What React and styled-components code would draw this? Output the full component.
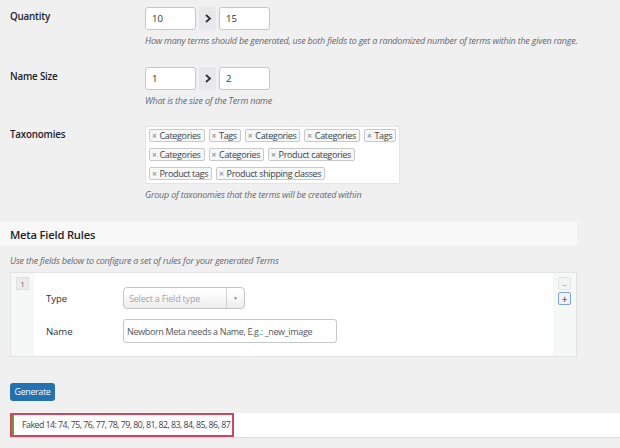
import React from "react";
import styled, { createGlobalStyle } from "styled-components";

const Global = createGlobalStyle`
  html, body { margin: 0; padding: 0; background: #f0f0f1; }
  body { font-family: "Open Sans", "Noto Sans", sans-serif; color: #1d2327; overflow: hidden; }
  * { box-sizing: border-box; }
`;

const Page = styled.div`
  width: 620px;
  height: 448px;
  padding-top: 7px;
  display: flex;
  flex-direction: column;
`;

const FormRow = styled.div`
  display: grid;
  grid-template-columns: 135px 1fr;
  padding-left: 10px;
  margin-bottom: ${(p) => p.$mb || 0}px;
`;

const Label = styled.div`
  font-size: 9.8px;
  font-weight: 600;
  letter-spacing: -0.2px;
  line-height: 14px;
  padding-top: 3px;
  color: #1d2327;
`;

const Field = styled.div`
  display: flex;
  flex-direction: column;
`;

const Range = styled.div`
  display: flex;
  gap: 3px;
  height: 23px;
`;

const TextInput = styled.div`
  width: ${(p) => p.$w || 51}px;
  height: ${(p) => p.$h || 23}px;
  border: 1px solid #c6c7ca;
  border-radius: 3px;
  background: #fff;
  font-size: ${(p) => p.$fs || 9.6}px;
  letter-spacing: ${(p) => p.$ls || 0}px;
  color: ${(p) => (p.$muted ? "#50575e" : "#2c3338")};
  display: flex;
  align-items: center;
  padding-left: ${(p) => p.$pl ?? 6}px;
  white-space: nowrap;
`;

const Sep = styled.div`
  width: 17px;
  background: #e8e8ea;
  display: flex;
  align-items: center;
  justify-content: center;
`;

const Desc = styled.div`
  font-size: 9px;
  font-style: italic;
  letter-spacing: -0.22px;
  color: #646970;
  margin-top: 5px;
  line-height: 12px;
  white-space: nowrap;
`;

const TagBox = styled.div`
  width: 255px;
  height: 58px;
  margin-top: 1px;
  background: #fff;
  border: 1px solid #e4e4e6;
  border-radius: 2px;
  padding: 2px 3px;
  display: flex;
  flex-direction: column;
  gap: 6px;
`;

const TagRow = styled.div`
  display: flex;
  gap: 4px;
`;

const Tag = styled.span`
  height: 13px;
  border: 1px solid #c8c9cc;
  border-radius: 2px;
  background: #f6f7f7;
  font-size: 9px;
  letter-spacing: -0.35px;
  line-height: 11px;
  color: #3c434a;
  padding: 0 3px 0 2px;
  display: inline-flex;
  align-items: center;
  gap: 3px;
  white-space: nowrap;
  &::before {
    content: "×";
    color: #787c82;
    font-size: 8.5px;
  }
`;

const SectionHeader = styled.div`
  width: 577px;
  height: 24px;
  background: #f8f8f9;
  margin-top: 21px;
  padding-left: 10px;
  display: flex;
  align-items: center;
  font-size: 11.2px;
  font-weight: 600;
  letter-spacing: -0.2px;
  color: #1d2327;
`;

const SectionDesc = styled(Desc)`
  margin: 9px 0 0 10px;
`;

const Rule = styled.div`
  margin: 5px 0 0 10px;
  width: 567px;
  height: 85px;
  border: 1px solid #e2e3e5;
  background: #f6f7f7;
  display: grid;
  grid-template-columns: 23px 1fr 23px;
`;

const Side = styled.div`
  display: flex;
  flex-direction: column;
  align-items: center;
  padding-top: 4px;
  gap: 2px;
`;

const Num = styled.div`
  width: 13px;
  height: 13px;
  border: 1px solid #e0e0e2;
  background: #ececed;
  font-size: 8px;
  color: #646970;
  display: flex;
  align-items: center;
  justify-content: center;
`;

const SmallBtn = styled.div`
  width: 13px;
  height: 13px;
  border: 1px solid ${(p) => (p.$active ? "#7ea6cf" : "#e4e5e7")};
  background: ${(p) => (p.$active ? "#f0f4f8" : "#f3f3f4")};
  border-radius: 2px;
  font-size: 10px;
  line-height: 10px;
  color: ${(p) => (p.$active ? "#2c3338" : "#b0b3b7")};
  display: flex;
  align-items: center;
  justify-content: center;
`;

const RuleBody = styled.div`
  background: #fff;
  padding: 14px 0 0 12px;
  display: flex;
  flex-direction: column;
  gap: 10px;
`;

const RuleRow = styled.div`
  display: grid;
  grid-template-columns: 77px 1fr;
  align-items: center;
`;

const RuleLabel = styled.div`
  font-size: 9.6px;
  letter-spacing: -0.1px;
  color: #2c3338;
`;

const Select = styled.div`
  width: 122px;
  height: 22px;
  border: 1px solid #c4c5c8;
  border-radius: 4px;
  background: linear-gradient(#ffffff 20%, #ececec);
  display: flex;
  align-items: stretch;
`;

const SelectText = styled.div`
  flex: 1;
  font-size: 9px;
  letter-spacing: -0.2px;
  color: #a2a4a8;
  display: flex;
  align-items: center;
  padding-left: 5px;
  white-space: nowrap;
`;

const SelectArrow = styled.div`
  width: 18px;
  border-left: 1px solid #d0d1d3;
  display: flex;
  align-items: center;
  justify-content: center;
  font-size: 5px;
  color: #888;
`;

const Button = styled.div`
  margin: 26px 0 0 10px;
  width: 45px;
  height: 18px;
  border-radius: 3px;
  background: #2271b1;
  color: #fff;
  font-size: 8.8px;
  letter-spacing: -0.3px;
  display: flex;
  align-items: center;
  justify-content: center;
`;

const Notice = styled.div`
  margin: 12px 0 0 10px;
  height: 24px;
  background: #fff;
  box-shadow: 0 1px 1px rgba(0, 0, 0, 0.08);
  display: flex;
`;

const Highlight = styled.div`
  border: 2px solid #d4435f;
  width: 224px;
  height: 24px;
  display: flex;
  align-items: center;
`;

const NoticeText = styled.div`
  height: 100%;
  border-left: 2px solid #6f9a3c;
  padding-left: 8px;
  font-size: 8.8px;
  letter-spacing: -0.52px;
  color: #3c434a;
  display: flex;
  align-items: center;
  white-space: nowrap;
`;

const Chevron = () => (
  <svg width="8" height="9" viewBox="0 0 8 9">
    <path d="M2 1 L6 4.5 L2 8" fill="none" stroke="#2c3338" strokeWidth="1.8" />
  </svg>
);

const tagRows = [
  ["Categories", "Tags", "Categories", "Categories", "Tags"],
  ["Categories", "Categories", "Product categories"],
  ["Product tags", "Product shipping classes"],
];

export default function App() {
  return (
    <Page>
      <Global />
      <FormRow $mb={20}>
        <Label>Quantity</Label>
        <Field>
          <Range>
            <TextInput>10</TextInput>
            <Sep><Chevron /></Sep>
            <TextInput>15</TextInput>
          </Range>
          <Desc>How many terms should be generated, use both fields to get a randomized number of terms within the given range.</Desc>
        </Field>
      </FormRow>
      <FormRow $mb={18}>
        <Label>Name Size</Label>
        <Field>
          <Range>
            <TextInput>1</TextInput>
            <Sep><Chevron /></Sep>
            <TextInput>2</TextInput>
          </Range>
          <Desc>What is the size of the Term name</Desc>
        </Field>
      </FormRow>
      <FormRow>
        <Label>Taxonomies</Label>
        <Field>
          <TagBox>
            {tagRows.map((row, r) => (
              <TagRow key={r}>
                {row.map((t, i) => (
                  <Tag key={i}>{t}</Tag>
                ))}
              </TagRow>
            ))}
          </TagBox>
          <Desc>Group of taxonomies that the terms will be created within</Desc>
        </Field>
      </FormRow>
      <SectionHeader>Meta Field Rules</SectionHeader>
      <SectionDesc>Use the fields below to configure a set of rules for your generated Terms</SectionDesc>
      <Rule>
        <Side><Num>1</Num></Side>
        <RuleBody>
          <RuleRow>
            <RuleLabel>Type</RuleLabel>
            <Select>
              <SelectText>Select a Field type</SelectText>
              <SelectArrow>▼</SelectArrow>
            </Select>
          </RuleRow>
          <RuleRow>
            <RuleLabel>Name</RuleLabel>
            <TextInput $w={214} $h={24} $pl={3} $fs={9} $ls={-0.35} $muted>
              Newborn Meta needs a Name, E.g.: _new_image
            </TextInput>
          </RuleRow>
        </RuleBody>
        <Side>
          <SmallBtn>–</SmallBtn>
          <SmallBtn $active>+</SmallBtn>
        </Side>
      </Rule>
      <Button>Generate</Button>
      <Notice>
        <Highlight>
          <NoticeText>Faked 14: 74, 75, 76, 77, 78, 79, 80, 81, 82, 83, 84, 85, 86, 87</NoticeText>
        </Highlight>
      </Notice>
    </Page>
  );
}
